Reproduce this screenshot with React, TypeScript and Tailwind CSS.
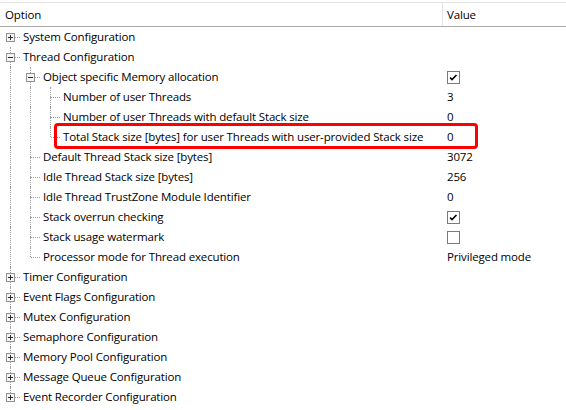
type Item = {
  label: string;
  value?: string | boolean;
  collapsed?: boolean;
  children?: Item[];
};

const tree: Item[] = [
  { label: "System Configuration", collapsed: true },
  {
    label: "Thread Configuration",
    children: [
      {
        label: "Object specific Memory allocation",
        value: true,
        children: [
          { label: "Number of user Threads", value: "3" },
          { label: "Number of user Threads with default Stack size", value: "0" },
          { label: "Total Stack size [bytes] for user Threads with user-provided Stack size", value: "0" },
        ],
      },
      { label: "Default Thread Stack size [bytes]", value: "3072" },
      { label: "Idle Thread Stack size [bytes]", value: "256" },
      { label: "Idle Thread TrustZone Module Identifier", value: "0" },
      { label: "Stack overrun checking", value: true },
      { label: "Stack usage watermark", value: false },
      { label: "Processor mode for Thread execution", value: "Privileged mode" },
    ],
  },
  { label: "Timer Configuration", collapsed: true },
  { label: "Event Flags Configuration", collapsed: true },
  { label: "Mutex Configuration", collapsed: true },
  { label: "Semaphore Configuration", collapsed: true },
  { label: "Memory Pool Configuration", collapsed: true },
  { label: "Message Queue Configuration", collapsed: true },
  { label: "Event Recorder Configuration", collapsed: true },
];

type Row = {
  item: Item;
  depth: number;
  guides: boolean[];
  first: boolean;
  last: boolean;
};

function flatten(items: Item[], depth: number, guides: boolean[], out: Row[]) {
  items.forEach((item, i) => {
    const last = i === items.length - 1;
    out.push({ item, depth, guides, first: i === 0, last });
    if (item.children && !item.collapsed) {
      flatten(item.children, depth + 1, [...guides, !last], out);
    }
  });
  return out;
}

const rows = flatten(tree, 0, [], []);

function Dots({ className }: { className: string }) {
  return <div className={`absolute border-[#a0a0a0] border-dotted ${className}`} />;
}

function ExpandBox({ open }: { open: boolean }) {
  return (
    <svg width="9" height="9" className="absolute left-[6px] top-[6px]">
      <rect x="0.5" y="0.5" width="8" height="8" fill="#f4f4f4" stroke="#919191" />
      <path d="M2 4.5h5" stroke="#2c2c2c" />
      {!open && <path d="M4.5 2v5" stroke="#2c2c2c" />}
    </svg>
  );
}

function CheckBox({ checked }: { checked: boolean }) {
  return (
    <svg width="13" height="13">
      <rect x="0.5" y="0.5" width="12" height="12" fill="#ffffff" stroke="#7a7a7a" />
      {checked && <path d="M3 6.5l2 2 4.5-4.5" fill="none" stroke="#000000" strokeWidth="1.6" />}
    </svg>
  );
}

function TreeRow({ row }: { row: Row }) {
  const { item, depth, guides, first, last } = row;
  const hasBox = !!item.children || item.collapsed;
  // the first root item has no connector lines in the original
  const rootFirst = depth === 0 && first;
  return (
    <div className="flex h-5 items-center">
      <div className="flex h-5 w-[443px] shrink-0 items-center">
        {guides.map((g, i) => (
          <div key={i} className="relative h-5 w-5 shrink-0">
            {g && <Dots className="left-[10px] top-0 h-5 border-l" />}
          </div>
        ))}
        <div className="relative h-5 w-5 shrink-0">
          {!rootFirst && <Dots className="left-[10px] top-0 h-[10px] border-l" />}
          {!last && !rootFirst && <Dots className="left-[10px] top-[10px] h-[10px] border-l" />}
          <Dots className="left-[11px] top-[10px] w-[11px] border-t" />
          {hasBox && <ExpandBox open={!item.collapsed} />}
        </div>
        <span className="relative whitespace-nowrap bg-white pl-[3px]">{item.label}</span>
      </div>
      <div className="flex h-5 items-center pl-1">
        {typeof item.value === "boolean" ? <CheckBox checked={item.value} /> : item.value}
      </div>
    </div>
  );
}

export default function App() {
  return (
    <div className="relative h-[410px] w-[566px] overflow-hidden bg-white font-['Open_Sans',sans-serif] text-[11.5px] leading-none tracking-[-0.15px] text-black">
      <div className="mt-[2px] flex h-[25px] items-center border-y border-t-[#e3e3e3] border-b-[#a9a9a9]">
        <div className="flex h-full w-[443px] items-center border-r border-[#e3e3e3] pl-[5px]">Option</div>
        <div className="pl-1">Value</div>
      </div>
      {rows.map((row, i) => <TreeRow key={i} row={row} />)}
      <div className="absolute left-[54px] top-[123px] h-[26px] w-[424px] rounded-[4px] border-[3px] border-[#ff0000]" />
    </div>
  );
}
